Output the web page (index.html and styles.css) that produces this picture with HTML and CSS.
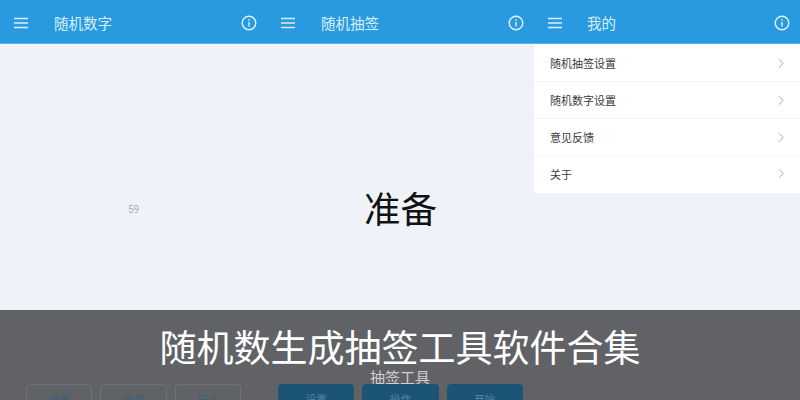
FILE: index.html
```html
<!DOCTYPE html>
<html lang="zh">
<head>
<meta charset="utf-8">
<title>随机数生成抽签工具软件合集</title>
<link rel="stylesheet" href="styles.css">
</head>
<body>
<main class="screens">
  <section class="panel">
    <header class="bar">
      <svg class="menu-icon" viewBox="0 0 16 12"><path d="M1 1.5h14M1 6h14M1 10.5h14"/></svg>
      <h2 class="bar-title">随机数字</h2>
      <svg class="info-icon" viewBox="0 0 16 16"><circle cx="8" cy="8" r="6.8"/><path d="M8 7v4.6"/><path d="M8 4.2v1.5"/></svg>
    </header>
    <div class="content number-content"><span class="number">59</span></div>
    <div class="actions">
      <button class="btn">设置</button><button class="btn">操作</button><button class="btn">停止</button>
    </div>
  </section>
  <section class="panel">
    <header class="bar">
      <svg class="menu-icon" viewBox="0 0 16 12"><path d="M1 1.5h14M1 6h14M1 10.5h14"/></svg>
      <h2 class="bar-title">随机抽签</h2>
      <svg class="info-icon" viewBox="0 0 16 16"><circle cx="8" cy="8" r="6.8"/><path d="M8 7v4.6"/><path d="M8 4.2v1.5"/></svg>
    </header>
    <div class="content draw-content"><span class="draw">准备</span></div>
    <div class="actions actions-solid">
      <button class="btn btn-solid">设置</button><button class="btn btn-solid">操作</button><button class="btn btn-solid">开始</button>
    </div>
  </section>
  <section class="panel">
    <header class="bar">
      <svg class="menu-icon" viewBox="0 0 16 12"><path d="M1 1.5h14M1 6h14M1 10.5h14"/></svg>
      <h2 class="bar-title bar-title-short">我的</h2>
      <svg class="info-icon" viewBox="0 0 16 16"><circle cx="8" cy="8" r="6.8"/><path d="M8 7v4.6"/><path d="M8 4.2v1.5"/></svg>
    </header>
    <ul class="settings">
      <li class="row"><span>随机抽签设置</span><svg class="chev" viewBox="0 0 7 12"><path d="M1 1l5 5-5 5"/></svg></li>
      <li class="row"><span>随机数字设置</span><svg class="chev" viewBox="0 0 7 12"><path d="M1 1l5 5-5 5"/></svg></li>
      <li class="row"><span>意见反馈</span><svg class="chev" viewBox="0 0 7 12"><path d="M1 1l5 5-5 5"/></svg></li>
      <li class="row"><span>关于</span><svg class="chev" viewBox="0 0 7 12"><path d="M1 1l5 5-5 5"/></svg></li>
    </ul>
  </section>
</main>
<aside class="caption">
  <p class="caption-title">随机数生成抽签工具软件合集</p>
  <p class="caption-sub">抽签工具</p>
</aside>
</body>
</html>
```
FILE: styles.css
```css
* { box-sizing: border-box; }
html, body { margin: 0; width: 800px; height: 400px; overflow: hidden; }
body {
  position: relative;
  background: #eff3f9;
  font-family: "Noto Sans CJK SC", "Noto Sans", sans-serif;
}
.screens { display: grid; grid-template-columns: 267px 267px 266px; height: 400px; }
.panel { display: flex; flex-direction: column; height: 400px; min-width: 0; }
.bar {
  flex: none;
  display: flex;
  align-items: center;
  height: 44px;
  background: #2a9ae0;
  border-bottom: 1px solid #5cb6ea;
  color: #d8effb;
  padding: 2px 10px 0 13px;
}
.menu-icon { width: 16px; height: 12px; flex: none; fill: none; stroke: #d8f0fb; stroke-width: 1.5; }
.bar-title { margin: 0 0 0 25px; font-size: 14.5px; font-weight: 400; line-height: 20px; flex: 1; }
.bar-title-short { margin-left: 24px; }
.info-icon { width: 16px; height: 16px; flex: none; fill: none; stroke: #e0f3fc; stroke-width: 1.4; }
.content { flex: 1; display: flex; align-items: center; }
.number-content { padding-left: 128px; }
.number { font-size: 10px; color: #a9adb8; font-family: Roboto, sans-serif; }
.draw-content { justify-content: center; padding-bottom: 2px; }
.draw { font-size: 36.5px; color: #121212; line-height: 50px; }
.actions {
  flex: none;
  position: relative;
  z-index: 1;
  display: flex;
  gap: 8px;
  padding: 10px 26px 0;
  height: 26px;
  overflow: hidden;
}
.actions-solid { padding: 10px 11px 0; gap: 8px; }
.btn {
  flex: 1;
  height: 26px;
  border: 1px solid #6c737b;
  border-radius: 4px;
  background: transparent;
  color: #3f5f7c;
  font: 10.5px/14px "Noto Sans CJK SC", sans-serif;
  padding: 3px 0 0;
  display: block;
}
.btn-solid { background: #1b5475; border-color: #1b5475; color: #5a859f; }
.settings { margin: 0; padding: 1px 0 0; list-style: none; background: #fff; height: 149px; }
.row {
  display: flex;
  align-items: center;
  justify-content: space-between;
  height: 37px;
  padding: 0 16px;
  font-size: 11px;
  color: #3a3a3a;
  border-bottom: 1px solid #f5f6f8;
}
.row:last-child { border-bottom: 0; padding-bottom: 2px; }
.chev { width: 6px; height: 11px; fill: none; stroke: #a6a6a6; stroke-width: 1.1; }
.caption {
  position: absolute;
  left: 0; right: 0; top: 310px; bottom: 0;
  background: rgba(55, 56, 60, .78);
  text-align: center;
  color: #fff;
}
.caption-title { margin: 14px 0 0; font-size: 37px; line-height: 44px; }
.caption-sub { margin: 0; font-size: 15px; line-height: 18px; color: #cfcfcf; }
```
